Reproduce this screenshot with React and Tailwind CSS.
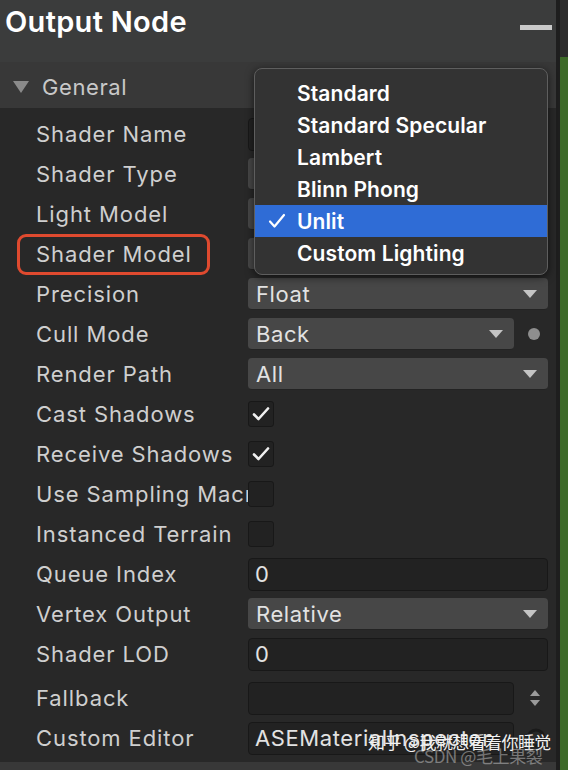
import React from "react";

const Tri = ({ cls = "" }) => (
  <svg width="16" height="10" viewBox="0 0 16 10" className={cls}>
    <path d="M1 1 L15 1 L8 9 Z" fill="#c4c4c4" />
  </svg>
);

const Check = () => (
  <svg width="18" height="16" viewBox="0 0 18 16">
    <path d="M2 8.5 L6.5 13 L16 2.5" fill="none" stroke="#f0f0f0" strokeWidth="2.6" strokeLinecap="round" strokeLinejoin="round" />
  </svg>
);

function Dropdown({ value, w = "w-[300px]" }) {
  return (
    <div className={`${w} h-[32px] rounded-[4px] bg-[#474747] border-b border-[#232323] flex items-center justify-between pl-[8px] pr-[10px]`}>
      <span className="text-[22px] text-[#e2e2e2] leading-none tracking-[0.6px]">{value}</span>
      <Tri />
    </div>
  );
}

function TextField({ value, w = "w-[300px]" }) {
  return (
    <div className={`${w} h-[33px] rounded-[4px] bg-[#222222] border border-[#181818] flex items-center pl-[6px] overflow-hidden`}>
      <span className="text-[22px] text-[#e2e2e2] leading-none tracking-[0.6px] whitespace-nowrap">{value}</span>
    </div>
  );
}

function CheckBox({ checked }) {
  return (
    <div className="w-[26px] h-[26px] rounded-[3px] bg-[#222222] border border-[#181818] flex items-center justify-center">
      {checked && <Check />}
    </div>
  );
}

function Row({ label, children, h = "h-[40px]" }) {
  return (
    <div className={`${h} flex items-center`}>
      <div className="w-[248px] pl-[36px] text-[22px] text-[#cfcfcf] whitespace-nowrap overflow-hidden leading-[26px] tracking-[0.9px]">{label}</div>
      <div className="flex items-center">{children}</div>
    </div>
  );
}

export default function App() {
  return (
    <div className="w-[568px] h-[770px] overflow-hidden relative flex bg-[#3a3a3a]" style={{ fontFamily: "Inter, 'Noto Sans', sans-serif" }}>
      <div className="w-[556px] flex flex-col">
        {/* Title */}
        <div className="h-[62px] bg-[#3b3c3c] flex items-start justify-between pl-[5px] pr-[4px]">
          <span className="mt-[5px] text-[29px] font-semibold text-white leading-[34px] tracking-[0.3px]">Output Node</span>
          <div className="mt-[25px] w-[32px] h-[5px] bg-[#c9c9c9]" />
        </div>
        {/* General header */}
        <div className="h-[46px] bg-[#383838] flex items-center pl-[12px] pt-[4px]">
          <svg width="18" height="14" viewBox="0 0 18 14">
            <path d="M1 1 L17 1 L9 13 Z" fill="#8a8a8a" />
          </svg>
          <span className="ml-[12px] text-[22px] text-[#c8c8c8] leading-none tracking-[0.6px]">General</span>
        </div>
        {/* Content */}
        <div className="flex-1 bg-[#282828] pt-[6px] flex flex-col">
          <Row label="Shader Name"><TextField value="" /></Row>
          <Row label="Shader Type"><Dropdown value="" /></Row>
          <Row label="Light Model"><Dropdown value="" /></Row>
          <Row label="Shader Model"><Dropdown value="" /></Row>
          <Row label="Precision"><Dropdown value="Float" /></Row>
          <Row label="Cull Mode">
            <Dropdown value="Back" w="w-[266px]" />
            <div className="ml-[14px] w-[12px] h-[12px] rounded-full bg-[#8e8e8e]" />
          </Row>
          <Row label="Render Path"><Dropdown value="All" /></Row>
          <Row label="Cast Shadows"><CheckBox checked /></Row>
          <Row label="Receive Shadows"><CheckBox checked /></Row>
          <Row label="Use Sampling Macros"><CheckBox /></Row>
          <Row label="Instanced Terrain"><CheckBox /></Row>
          <Row label="Queue Index"><TextField value="0" /></Row>
          <Row label="Vertex Output"><Dropdown value="Relative" /></Row>
          <Row label="Shader LOD"><TextField value="0" /></Row>
          <Row label="Fallback" h="h-[44px] pt-[4px]">
            <TextField value="" w="w-[266px]" />
            <svg className="ml-[15px]" width="12" height="20" viewBox="0 0 12 20">
              <path d="M1 8 L6 2 L11 8 Z" fill="#9a9a9a" />
              <path d="M1 12 L6 18 L11 12 Z" fill="#9a9a9a" />
            </svg>
          </Row>
          <Row label="Custom Editor">
            <TextField value="ASEMaterialInspector" w="w-[266px]" />
            <svg className="ml-[12px]" width="20" height="22" viewBox="0 0 20 22">
              <circle cx="10" cy="11" r="8" fill="none" stroke="#1a1a1a" strokeWidth="3" />
            </svg>
          </Row>
          <div className="flex-1" />
          <div className="h-[8px] bg-[#383838]" />
        </div>
      </div>
      {/* right edge strip */}
      <div className="w-[4px] bg-[#1e1e1e]" />
      <div className="w-[8px] flex flex-col">
        <div className="h-[57px] bg-[#2c2c2c]" />
        <div className="flex-1 bg-[#3d6a28]" />
      </div>

      {/* red highlight */}
      <div className="absolute left-[17px] top-[234px] w-[193px] h-[41px] rounded-[9px] border-[3px] border-[#df4a2f]" />

      {/* popup menu */}
      <div className="absolute left-[254px] top-[68px] w-[294px] h-[207px] rounded-[8px] bg-[#333333] border border-[#5e5e5e] shadow-[0_2px_8px_rgba(0,0,0,0.6)] pt-[8px] flex flex-col">
        {["Standard", "Standard Specular", "Lambert", "Blinn Phong", "Unlit", "Custom Lighting"].map((t) => (
          <div key={t} className={`h-[32px] flex items-center ${t === "Unlit" ? "bg-[#2f6cd6]" : ""}`}>
            <div className="w-[42px] flex items-center justify-center pl-[2px]">
              {t === "Unlit" && (
                <svg width="18" height="16" viewBox="0 0 18 16">
                  <path d="M2 8.5 L6.5 13.5 L16 2" fill="none" stroke="#ffffff" strokeWidth="2.2" strokeLinecap="round" strokeLinejoin="round" />
                </svg>
              )}
            </div>
            <span className="text-[21px] font-semibold text-white leading-none tracking-[0.1px]">{t}</span>
          </div>
        ))}
      </div>

      {/* watermark */}
      <div className="absolute left-[368px] top-[733px] text-[17px] text-[#f2f2f2] leading-none whitespace-nowrap tracking-[-0.6px]" style={{ fontFamily: "'Noto Sans CJK SC', sans-serif" }}>
        知乎 @我就想看着你睡觉
      </div>
      <div className="absolute left-[414px] top-[747px] text-[17px] text-[#c8c8c8] leading-none whitespace-nowrap opacity-50 tracking-[-0.4px]" style={{ fontFamily: "'Noto Sans CJK SC', sans-serif" }}>
        CSDN @毛上果裂
      </div>
    </div>
  );
}
